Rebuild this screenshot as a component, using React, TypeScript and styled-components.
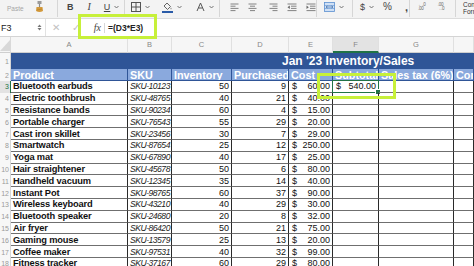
import React from "react";
import styled, { createGlobalStyle, css } from "styled-components";

const GlobalStyle = createGlobalStyle`
  html, body {
    margin: 0;
    padding: 0;
    background: #ffffff;
    overflow: hidden;
  }
  body {
    font-family: "Liberation Sans", Arial, sans-serif;
  }
`;

const COLS = "11px 117px 44px 60px 57px 44px 46px 75px 1fr";

const Window = styled.div`
  position: relative;
  width: 474px;
  height: 266px;
  overflow: hidden;
  background: #fff;
`;

/* ---------- ribbon ---------- */

const Ribbon = styled.div`
  display: flex;
  align-items: flex-start;
  height: 18px;
  background: #f3f3f3;
  border-bottom: 1px solid #dcdcdc;
  color: #555;
`;

const Tool = styled.div<{ $w: number; $pad?: number }>`
  display: flex;
  align-items: center;
  gap: 4px;
  width: ${(p) => p.$w}px;
  padding-left: ${(p) => p.$pad ?? 0}px;
  height: 14px;
  box-sizing: border-box;
  flex-shrink: 0;
`;

const Sep = styled.div`
  width: 1px;
  height: 17px;
  background: #d6d6d6;
  flex-shrink: 0;
`;

const PasteLabel = styled.span`
  font-size: 6.5px;
  color: #a5a5a5;
  margin-top: 2px;
  width: 24px;
`;

const Glyph = styled.span<{ $b?: boolean; $i?: boolean; $u?: boolean; $size?: number }>`
  font-size: ${(p) => p.$size ?? 9}px;
  line-height: 10px;
  color: #444;
  font-weight: ${(p) => (p.$b ? 700 : 400)};
  font-style: ${(p) => (p.$i ? "italic" : "normal")};
  text-decoration: ${(p) => (p.$u ? "underline" : "none")};
  font-family: ${(p) => (p.$i ? '"Liberation Serif", serif' : '"Liberation Sans", sans-serif')};
`;

const Decimal = styled.div`
  display: flex;
  flex-direction: column;
  font-size: 4.5px;
  line-height: 4.5px;
  color: #6a6a6a;
  letter-spacing: -0.2px;
`;

const CondLabel = styled.div`
  font-size: 6.5px;
  line-height: 7px;
  color: #333;
  padding-top: 1px;
`;

const Chevron = () => (
  <svg width="5" height="4" viewBox="0 0 5 4">
    <path d="M0.5 1 L2.5 3 L4.5 1" fill="none" stroke="#666" strokeWidth="0.9" />
  </svg>
);

const Brush = () => (
  <svg width="9" height="12" viewBox="0 0 9 12">
    <rect x="2.5" y="0" width="4" height="3" fill="#9a9a9a" />
    <path d="M4.5 3 L4.5 6" stroke="#8a8a8a" strokeWidth="1.2" />
    <path d="M1.5 6 L7.5 6 L8 10 Q4.5 12 1 10 Z" fill="#d39a3c" />
    <path d="M2 9 L7 8" stroke="#b27a20" strokeWidth="0.6" />
  </svg>
);

const BordersIcon = () => (
  <svg width="10" height="10" viewBox="0 0 10 10">
    <rect x="0.5" y="0.5" width="9" height="9" fill="none" stroke="#555" />
    <path d="M5 0.5 V9.5 M0.5 5 H9.5" stroke="#555" />
  </svg>
);

const Bucket = () => (
  <svg width="11" height="12" viewBox="0 0 11 12">
    <path d="M2 5 L5 2 L8.5 5.5 L5.5 8.5 Z" fill="none" stroke="#555" strokeWidth="0.9" />
    <path d="M9 6.5 Q10 8 9 8.5 Q8 8 9 6.5" fill="#555" />
    <rect x="0" y="10" width="11" height="2" fill="#2a5ba8" />
  </svg>
);

const LetterA = () => (
  <svg width="9" height="11" viewBox="0 0 9 11">
    <path d="M1 9 L4.5 1 L8 9 M2.5 6 H6.5" fill="none" stroke="#555" strokeWidth="1" />
  </svg>
);

const Lines = ({ kind }: { kind: "left" | "center" | "right" }) => {
  const rows = [8, 5, 8, 5];
  return (
    <svg width="9" height="9" viewBox="0 0 9 9">
      {rows.map((w, i) => {
        const x = kind === "left" ? 0.5 : kind === "right" ? 8.5 - w : (9 - w) / 2;
        return <path key={i} d={`M${x} ${1 + i * 2.2} h${w}`} stroke="#666" strokeWidth="0.8" />;
      })}
    </svg>
  );
};

const Indent = ({ dir }: { dir: 1 | -1 }) => (
  <svg width="10" height="9" viewBox="0 0 10 9">
    <path d="M0.5 1 h9 M4 3.2 h5.5 M4 5.4 h5.5 M0.5 7.6 h9" stroke="#666" strokeWidth="0.8" />
    <path d={dir === 1 ? "M0.5 2.6 L2.8 4.3 L0.5 6" : "M2.8 2.6 L0.5 4.3 L2.8 6"} fill="#666" />
  </svg>
);

const Merge = () => (
  <svg width="11" height="10" viewBox="0 0 11 10">
    <rect x="0.5" y="0.5" width="10" height="9" fill="#cfe0f5" stroke="#5b8fd0" strokeWidth="0.8" />
    <path d="M0.5 3.5 H10.5 M0.5 6.5 H10.5" stroke="#5b8fd0" strokeWidth="0.6" />
    <path d="M2 5 H9 M3.5 4 L2 5 L3.5 6 M7.5 4 L9 5 L7.5 6" stroke="#2f5f9e" strokeWidth="0.6" fill="none" />
  </svg>
);

/* ---------- formula bar ---------- */

const FormulaBar = styled.div`
  display: flex;
  align-items: center;
  height: 17px;
  background: #fff;
  border-bottom: 1px solid #d4d4d4;
`;

const NameBox = styled.div`
  display: flex;
  align-items: center;
  justify-content: space-between;
  width: 46px;
  height: 100%;
  padding: 0 3px 0 1px;
  box-sizing: border-box;
  border-right: 1px solid #e2e2e2;
  font-size: 9px;
  color: #222;
`;

const Spinner = styled.div`
  display: flex;
  flex-direction: column;
  gap: 1px;
`;

const BarButton = styled.span<{ $w: number }>`
  width: ${(p) => p.$w}px;
  text-align: center;
  font-size: 10px;
  color: #c2c2c2;
`;

const Fx = styled.span`
  font-family: "Liberation Serif", serif;
  font-style: italic;
  font-size: 10px;
  color: #444;
  width: 19px;
  box-sizing: border-box;
  text-align: right;
  padding-right: 3px;
  border-right: 1px solid #d8d8d8;
  line-height: 10px;
`;

const Formula = styled.span`
  font-size: 8.5px;
  font-weight: 700;
  color: #222;
  padding-left: 3px;
`;

/* ---------- sheet ---------- */

const Row = styled.div<{ $h: number }>`
  display: grid;
  grid-template-columns: ${COLS};
  height: ${(p) => p.$h}px;
`;

const Corner = styled.div`
  background: #f6f6f6;
  border-right: 1px solid #d9d9d9;
  border-bottom: 1px solid #cfcfcf;
  overflow: hidden;
`;

const ColHead = styled.div<{ $active?: boolean }>`
  display: flex;
  align-items: center;
  justify-content: center;
  font-size: 7.5px;
  color: #888;
  background: ${(p) => (p.$active ? "#e3e3e3" : "#f6f6f6")};
  border-right: 1px solid #e0e0e0;
  border-bottom: ${(p) => (p.$active ? "2px solid #217346" : "1px solid #cfcfcf")};
  box-sizing: border-box;
`;

const RowNum = styled.div<{ $active?: boolean }>`
  display: flex;
  align-items: center;
  justify-content: flex-end;
  padding-right: 1px;
  font-size: 7px;
  color: ${(p) => (p.$active ? "#217346" : "#9a9a9a")};
  background: ${(p) => (p.$active ? "#e3e3e3" : "#f7f7f7")};
  border-right: ${(p) => (p.$active ? "1px solid #217346" : "1px solid #d6d6d6")};
  box-sizing: border-box;
  overflow: hidden;
`;

const Title = styled.div`
  grid-column: 2 / -1;
  background: #2f5597;
  color: #fff;
  font-weight: 700;
  font-size: 12px;
  line-height: 16px;
  padding-left: 271px;
  white-space: nowrap;
  overflow: hidden;
`;

const HeadCell = styled.div`
  background: #8aa9dd;
  color: #fff;
  font-weight: 700;
  font-size: 10.8px;
  line-height: 12px;
  padding-left: 2px;
  white-space: nowrap;
  overflow: hidden;
  border-right: 1px solid #2f5597;
  border-bottom: 1px solid #2f5597;
  box-sizing: border-box;
`;

const Cell = styled.div<{ $kind?: "name" | "sku" | "num" | "money" | "blank" }>`
  position: relative;
  display: flex;
  align-items: center;
  font-size: 9px;
  color: #111;
  white-space: nowrap;
  padding: 0 2px;
  box-sizing: border-box;
  border-right: 1px solid #2a2a2a;
  border-bottom: 1px solid #6f6f6f;
  ${(p) =>
    p.$kind === "name" &&
    css`
      font-weight: 700;
      font-size: 9.3px;
      letter-spacing: -0.15px;
    `}
  ${(p) =>
    p.$kind === "sku" &&
    css`
      font-style: italic;
      font-size: 8.6px;
      letter-spacing: -0.5px;
      color: #222;
    `}
  ${(p) =>
    p.$kind === "num" &&
    css`
      justify-content: flex-end;
    `}
  ${(p) =>
    p.$kind === "money" &&
    css`
      justify-content: space-between;
      padding-left: 3px;
    `}
`;

const Selection = styled.div`
  position: absolute;
  inset: -1px;
  border: 1.5px solid #217346;
  pointer-events: none;
  &::after {
    content: "";
    position: absolute;
    right: -3px;
    bottom: -3px;
    width: 4px;
    height: 4px;
    background: #217346;
    border: 1px solid #fff;
  }
`;

const Callout = styled.div<{ $x: number; $y: number; $w: number; $h: number }>`
  position: absolute;
  left: ${(p) => p.$x}px;
  top: ${(p) => p.$y}px;
  width: ${(p) => p.$w}px;
  height: ${(p) => p.$h}px;
  border: 3.5px solid #c7f03a;
  box-sizing: border-box;
  pointer-events: none;
`;

type Item = [string, string, number, number, string];

const items: Item[] = [
  ["Bluetooth earbuds", "SKU-10123", 50, 9, "60.00"],
  ["Electric toothbrush", "SKU-48765", 40, 21, "40.00"],
  ["Resistance bands", "SKU-90234", 60, 4, "15.00"],
  ["Portable charger", "SKU-76543", 55, 29, "20.00"],
  ["Cast iron skillet", "SKU-23456", 30, 7, "29.00"],
  ["Smartwatch", "SKU-87654", 25, 12, "250.00"],
  ["Yoga mat", "SKU-67890", 40, 17, "25.00"],
  ["Hair straightener", "SKU-45678", 50, 6, "80.00"],
  ["Handheld vacuum", "SKU-12345", 35, 14, "40.00"],
  ["Instant Pot", "SKU-98765", 60, 37, "90.00"],
  ["Wireless keyboard", "SKU-43210", 40, 29, "30.00"],
  ["Bluetooth speaker", "SKU-24680", 20, 8, "32.00"],
  ["Air fryer", "SKU-86420", 50, 21, "75.00"],
  ["Gaming mouse", "SKU-13579", 25, 13, "20.00"],
  ["Coffee maker", "SKU-97531", 40, 32, "99.00"],
  ["Fitness tracker", "SKU-37167", 60, 29, "80.00"],
];

const letters = ["A", "B", "C", "D", "E", "F", "G", ""];
const headers = ["Product", "SKU", "Inventory", "Purchased", "Cost", "Subtotal", "Sales tax (6%)", "Commission"];

export default function App() {
  return (
    <>
      <GlobalStyle />
      <Window>
        <Ribbon>
          <Tool $w={57} $pad={7}>
            <PasteLabel>Paste</PasteLabel>
            <Brush />
          </Tool>
          <Sep />
          <Tool $w={66} $pad={9}>
            <Glyph $b>B</Glyph>
            <span style={{ width: 6 }} />
            <Glyph $i $size={10}>I</Glyph>
            <span style={{ width: 5 }} />
            <Glyph $u>U</Glyph>
            <Chevron />
          </Tool>
          <Sep />
          <Tool $w={30} $pad={6}>
            <BordersIcon />
            <Chevron />
          </Tool>
          <Tool $w={64} $pad={7}>
            <Bucket />
            <Chevron />
            <span style={{ width: 6 }} />
            <LetterA />
            <Chevron />
          </Tool>
          <Sep />
          <Tool $w={65} $pad={10}>
            <Lines kind="left" />
            <span style={{ width: 1 }} />
            <Lines kind="center" />
            <span style={{ width: 4 }} />
            <Lines kind="right" />
          </Tool>
          <Tool $w={31} $pad={2}>
            <Indent dir={-1} />
            <span style={{ width: 1 }} />
            <Indent dir={1} />
          </Tool>
          <Sep />
          <Tool $w={35} $pad={7}>
            <Merge />
            <Chevron />
          </Tool>
          <Sep />
          <Tool $w={56} $pad={7}>
            <Glyph $size={9}>$</Glyph>
            <Chevron />
            <span style={{ width: 1 }} />
            <Glyph $size={10}>%</Glyph>
            <span style={{ width: 5 }} />
            <Glyph $b $size={11}>,</Glyph>
          </Tool>
          <Sep />
          <Tool $w={45} $pad={8}>
            <Decimal>
              <span>←.0</span>
              <span>.00</span>
            </Decimal>
            <span style={{ width: 3 }} />
            <Decimal>
              <span>&nbsp;.00</span>
              <span>→.0</span>
            </Decimal>
          </Tool>
          <Sep />
          <Tool $w={30} $pad={7}>
            <CondLabel>
              Cond
              <br />
              Form
            </CondLabel>
          </Tool>
        </Ribbon>

        <FormulaBar>
          <NameBox>
            <span>F3</span>
            <Spinner>
              <svg width="5" height="3" viewBox="0 0 5 3">
                <path d="M0.5 3 L2.5 0.5 L4.5 3 Z" fill="#777" />
              </svg>
              <svg width="5" height="3" viewBox="0 0 5 3">
                <path d="M0.5 0 L2.5 2.5 L4.5 0 Z" fill="#777" />
              </svg>
            </Spinner>
          </NameBox>
          <BarButton $w={20}>✕</BarButton>
          <BarButton $w={20}>✓</BarButton>
          <Fx>fx</Fx>
          <Formula>=(D3*E3)</Formula>
        </FormulaBar>

        <Row $h={16}>
          <Corner>
            <svg width="11" height="16" viewBox="0 0 11 16" style={{ display: "block" }}>
              <path d="M10 3 L10 14 L0 14 Z" fill="#d8d8d8" />
            </svg>
          </Corner>
          {letters.map((l, i) => (
            <ColHead key={i} $active={l === "F"}>
              {l}
            </ColHead>
          ))}
        </Row>

        <Row $h={16}>
          <RowNum>1</RowNum>
          <Title>Jan &apos;23 Inventory/Sales</Title>
        </Row>

        <Row $h={12}>
          <RowNum>2</RowNum>
          {headers.map((h) => (
            <HeadCell key={h}>{h}</HeadCell>
          ))}
        </Row>

        {items.map(([name, sku, inv, bought, cost], i) => (
          <Row $h={11.8} key={sku}>
            <RowNum $active={i === 0}>{i + 3}</RowNum>
            <Cell $kind="name">{name}</Cell>
            <Cell $kind="sku">{sku}</Cell>
            <Cell $kind="num">{inv}</Cell>
            <Cell $kind="num">{bought}</Cell>
            <Cell $kind="money">
              <span>$</span>
              <span>{cost}</span>
            </Cell>
            {i === 0 ? (
              <Cell $kind="money">
                <span>$</span>
                <span>540.00</span>
                <Selection />
              </Cell>
            ) : (
              <Cell $kind="blank" />
            )}
            <Cell $kind="blank" />
            <Cell $kind="blank" />
          </Row>
        ))}

        <Callout $x={78} $y={14} $w={79} $h={25} />
        <Callout $x={317} $y={73} $w={79} $h={26} />
      </Window>
    </>
  );
}
